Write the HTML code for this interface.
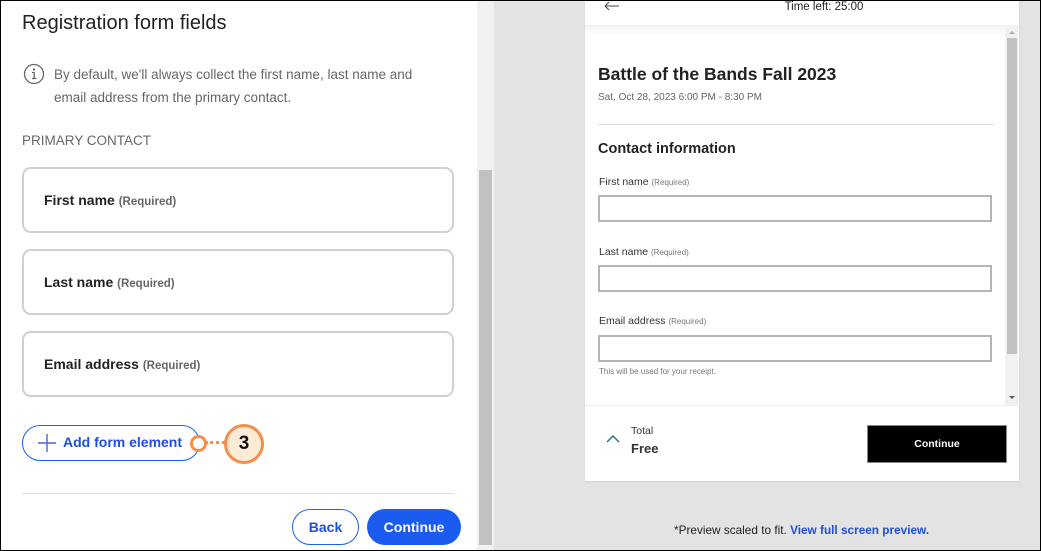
<!DOCTYPE html>
<html><head><meta charset="utf-8"><style>
*{box-sizing:border-box;margin:0;padding:0}
body{width:1041px;height:551px;overflow:hidden;font-family:"Liberation Sans",sans-serif;background:#000;position:relative}
.a{position:absolute}
#frame{left:1px;top:1px;width:1039px;height:549px;background:#fff;overflow:hidden}
.card{position:absolute;left:21px;width:432px;height:66px;border:2px solid #d0d0d0;border-radius:9px;background:#fff}
.card span{position:absolute;left:20px;top:23px;font-size:14px;font-weight:bold;color:#222}
.card span i{font-style:normal;font-weight:bold;font-size:11.5px;color:#666}
.pl{font-size:10.5px;color:#333}
.pl i{font-style:normal;font-size:8px;color:#777}
.inp{position:absolute;left:13px;width:394px;height:27px;border:2px solid #b5b5b5;background:#fff}
</style></head><body>
<div id="frame" class="a">
 <div class="a" style="left:21px;top:11px;font-size:20px;color:#222">Registration form fields</div>
 <svg class="a" style="left:22px;top:62px" width="22" height="22" viewBox="0 0 22 22"><circle cx="11" cy="11" r="9.5" fill="none" stroke="#666" stroke-width="1.3"/><circle cx="11" cy="6.5" r="1.1" fill="#666"/><path d="M9 9.5h2.2v6M9 15.5h4.5" stroke="#666" stroke-width="1.3" fill="none"/></svg>
 <div class="a" style="left:53px;top:62px;width:390px;font-size:13.5px;line-height:23px;color:#666">By default, we'll always collect the first name, last name and email address from the primary contact.</div>
 <div class="a" style="left:21px;top:132px;font-size:13.5px;color:#666">PRIMARY CONTACT</div>
 <div class="card" style="top:166px"><span>First name <i>(Required)</i></span></div>
 <div class="card" style="top:248px"><span>Last name <i>(Required)</i></span></div>
 <div class="card" style="top:330px"><span>Email address <i>(Required)</i></span></div>
 <div class="a" style="left:21px;top:424px;width:178px;height:36px;border:1px solid #1d5ef0;border-radius:18px"></div>
 <svg class="a" style="left:36px;top:432px" width="20" height="20"><path d="M10 1v18M1 10h18" stroke="#4b62d8" stroke-width="1.4"/></svg>
 <div class="a" style="left:62px;top:433px;font-size:14px;font-weight:bold;color:#1d4fe0">Add form element</div>
 <div class="a" style="left:204px;top:440px;width:20px;border-top:3px dotted #f68d4a"></div>
 <div class="a" style="left:189px;top:434px;width:17px;height:17px;border-radius:50%;border:3px solid #f68d4a;background:#fff"></div>
 <div class="a" style="left:223px;top:423px;width:40px;height:40px;border-radius:50%;border:3px solid #f68d4a;background:#fdebd6;text-align:center;line-height:34px;font-size:19px;font-weight:bold;color:#111">3</div>
 <div class="a" style="left:21px;top:492px;width:432px;height:1px;background:#ddd"></div>
 <div class="a" style="left:291px;top:508px;width:67px;height:36px;border:1px solid #1d5ef0;border-radius:18px;text-align:center;line-height:34px;font-size:14px;font-weight:bold;color:#1d4fe0">Back</div>
 <div class="a" style="left:366px;top:508px;width:94px;height:36px;background:#1b5bef;border-radius:18px;text-align:center;line-height:36px;font-size:14px;font-weight:bold;color:#fff">Continue</div>
 <div class="a" style="left:476px;top:0;width:17px;height:549px;background:#f1f1f1"></div>
 <div class="a" style="left:478px;top:169px;width:13px;height:375px;background:#c1c1c1"></div>
 <div class="a" style="left:493px;top:0;width:546px;height:549px;background:#e3e3e3"></div>
 <div class="a" style="left:584px;top:-1px;width:434px;height:481px;background:#fff;box-shadow:0 1px 2px rgba(0,0,0,.08)">
  <svg class="a" style="left:19px;top:1px" width="16" height="10"><path d="M1 5h14M1 5l4-4M1 5l4 4" stroke="#444" stroke-width="1" fill="none"/></svg>
  <div class="a" style="left:0;width:434px;top:1px;text-align:center;font-size:11.5px;color:#222;padding-left:44px">Time left: 25:00</div>
  <div class="a" style="left:0;top:25px;width:434px;height:10px;background:linear-gradient(#f2f2f2,#fff)"></div>
  <div class="a" style="left:420px;top:27px;width:13px;height:378px;background:#f1f1f1"></div>
  <div class="a" style="left:422px;top:38px;width:10px;height:316px;background:#c1c1c1"></div>
  <div class="a" style="left:424px;top:31px;border:3px solid transparent;border-bottom:3px solid #aaa;border-top:0"></div>
  <div class="a" style="left:424px;top:396px;border:3px solid transparent;border-top:3px solid #555;border-bottom:0"></div>
  <div class="a" style="left:13px;top:64px;font-size:17.5px;font-weight:bold;color:#222">Battle of the Bands Fall 2023</div>
  <div class="a" style="left:13px;top:92px;font-size:10px;color:#666">Sat, Oct 28, 2023 6:00 PM - 8:30 PM</div>
  <div class="a" style="left:13px;top:124px;width:396px;height:1px;background:#e3e3e3"></div>
  <div class="a" style="left:13px;top:141px;font-size:14.5px;font-weight:bold;color:#222">Contact information</div>
  <div class="a pl" style="left:14px;top:176px">First name <i>(Required)</i></div>
  <div class="inp" style="top:195px"></div>
  <div class="a pl" style="left:14px;top:246px">Last name <i>(Required)</i></div>
  <div class="inp" style="top:265px"></div>
  <div class="a pl" style="left:14px;top:315px">Email address <i>(Required)</i></div>
  <div class="inp" style="top:335px"></div>
  <div class="a" style="left:14px;top:367px;font-size:8px;color:#777">This will be used for your receipt.</div>
  <div class="a" style="left:0;top:405px;width:434px;height:1px;background:#eee"></div>
  <svg class="a" style="left:21px;top:434px" width="14" height="10"><path d="M1 8l6-6 6 6" stroke="#1a7474" stroke-width="1.4" fill="none"/></svg>
  <div class="a" style="left:46px;top:425px;font-size:10.5px;color:#333">Total</div>
  <div class="a" style="left:46px;top:441px;font-size:13px;font-weight:bold;color:#333">Free</div>
  <div class="a" style="left:282px;top:425px;width:140px;height:38px;background:#000;border:1px solid #888;text-align:center;line-height:36px;font-size:10.5px;font-weight:bold;color:#fff">Continue</div>
 </div>
 <div class="a" style="left:673px;top:522px;font-size:11.8px;color:#222">*Preview scaled to fit. <span style="color:#1d4fe0;font-weight:bold">View full screen preview.</span></div>
</div>
</body></html>
